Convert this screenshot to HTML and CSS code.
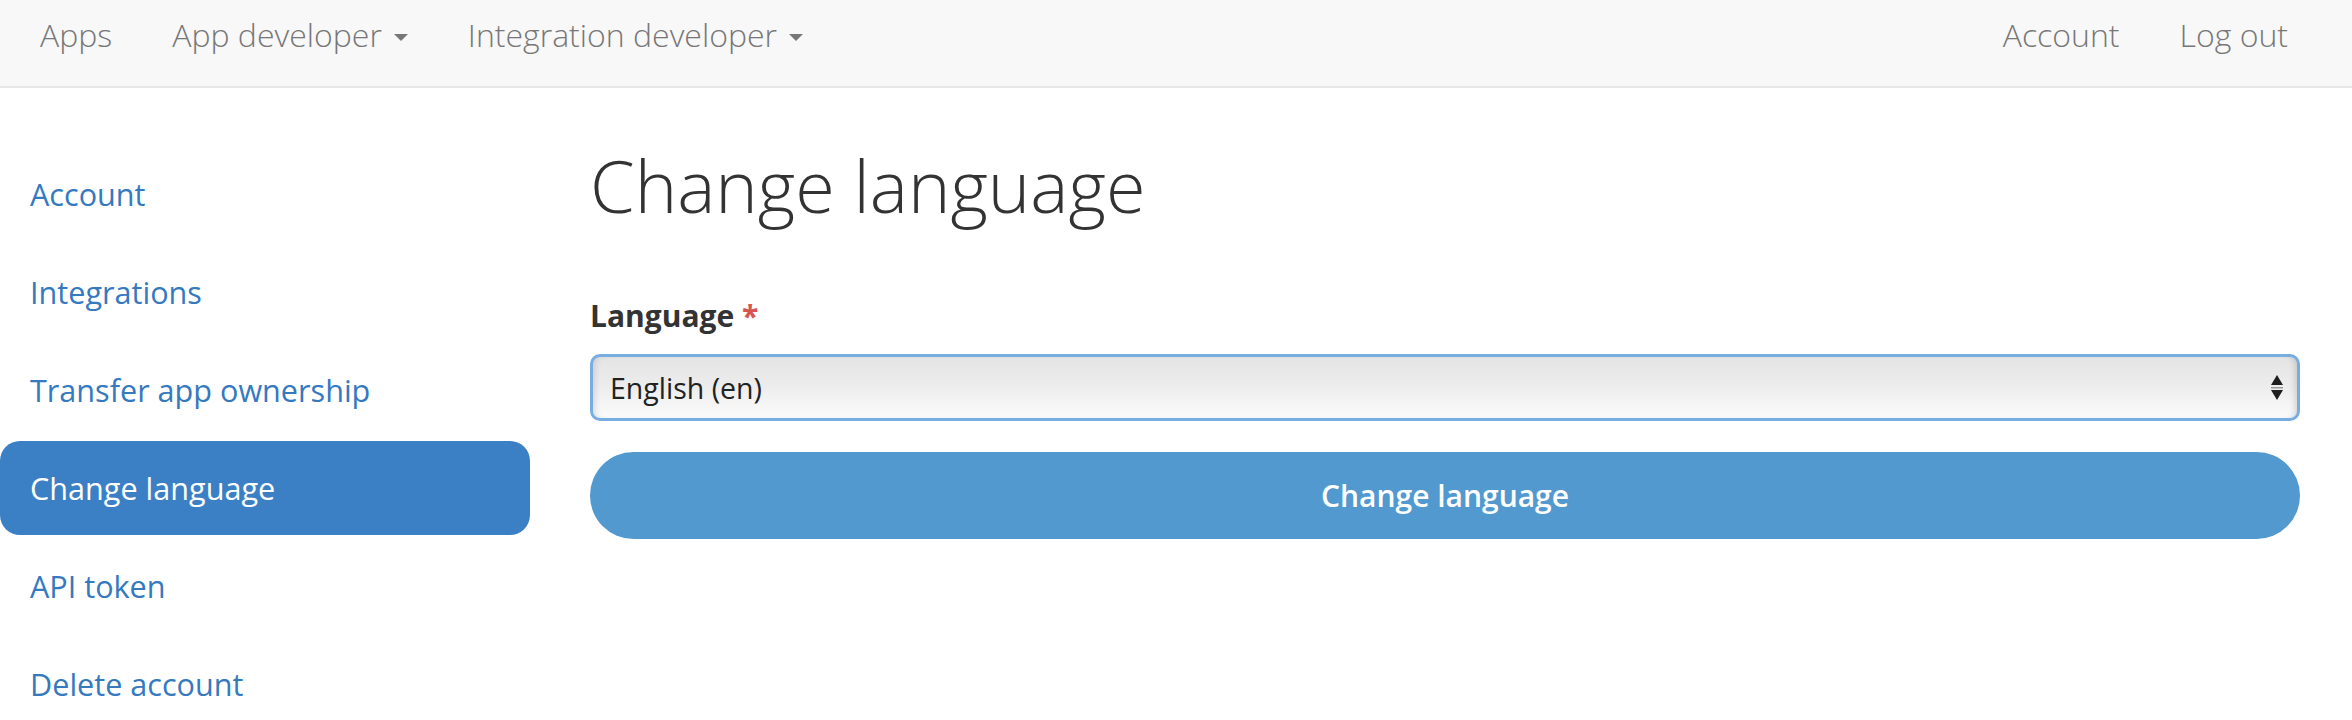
FILE: index.html
```html
<!DOCTYPE html>
<html lang="en">
<head>
<meta charset="utf-8">
<title>Change language</title>
<link rel="stylesheet" href="styles.css">
</head>
<body>
<header class="navbar">
  <nav class="nav-group">
    <a class="nav-link" href="#">Apps</a>
    <a class="nav-link" href="#">App developer <span class="caret"></span></a>
    <a class="nav-link" href="#">Integration developer <span class="caret"></span></a>
  </nav>
  <nav class="nav-group">
    <a class="nav-link" href="#">Account</a>
    <a class="nav-link" href="#">Log out</a>
  </nav>
</header>
<div class="page">
  <aside class="sidebar">
    <a class="side-link" href="#">Account</a>
    <a class="side-link" href="#">Integrations</a>
    <a class="side-link" href="#">Transfer app ownership</a>
    <a class="side-link active" href="#">Change language</a>
    <a class="side-link" href="#">API token</a>
    <a class="side-link" href="#">Delete account</a>
  </aside>
  <main class="content">
    <h1 class="title">Change language</h1>
    <form class="form">
      <label class="label" for="lang">Language <span class="req">*</span></label>
      <div class="select-wrap">
        <select id="lang" class="select">
          <option>English (en)</option>
        </select>
        <svg class="select-arrows" width="14" height="28" viewBox="0 0 14 28">
          <path d="M7 1 L13 11 L1 11 Z" fill="#1e1e1e"/>
          <rect x="1" y="13" width="12" height="1.5" fill="#9a9a9a"/>
          <path d="M1 16 L13 16 L7 26 Z" fill="#1e1e1e"/>
        </svg>
      </div>
      <button type="button" class="btn">Change language</button>
    </form>
  </main>
</div>
</body>
</html>
```
FILE: styles.css
```css
* { box-sizing: border-box; }
html, body {
  margin: 0;
  padding: 0;
  background: #fff;
  font-family: "Open Sans", "Liberation Sans", sans-serif;
  color: #333;
}
a { text-decoration: none; }

.navbar {
  height: 88px;
  background: #f8f8f8;
  border-bottom: 2px solid #e7e7e7;
  display: flex;
  justify-content: space-between;
  align-items: flex-start;
  padding: 0 34px 0 10px;
}
.nav-group {
  display: flex;
  align-items: flex-start;
}
.nav-link {
  display: flex;
  align-items: center;
  padding: 14px 30px 0;
  line-height: 42px;
  font-size: 32px;
  font-weight: 300;
  color: #777;
}
.caret {
  display: inline-block;
  width: 0;
  height: 0;
  margin-left: 12px;
  margin-top: 4px;
  border-top: 7px solid #777;
  border-left: 7px solid transparent;
  border-right: 7px solid transparent;
}

.page {
  display: flex;
  align-items: flex-start;
  padding-top: 59px;
}
.sidebar {
  width: 530px;
  flex: none;
  display: flex;
  flex-direction: column;
  gap: 4px;
}
.side-link {
  display: block;
  height: 94px;
  line-height: 94px;
  padding: 0 30px;
  font-size: 30.6px;
  font-weight: 400;
  color: #3579bf;
  border-radius: 20px;
}
.side-link.active {
  background: #3b80c4;
  color: #fff;
}

.content {
  flex: 1;
  margin: 0 52px 0 60px;
}
.title {
  margin: 0;
  font-size: 72px;
  line-height: 77px;
  font-weight: 300;
  color: #333;
}
.form {
  display: flex;
  flex-direction: column;
  margin-top: 71px;
}
.label {
  font-size: 30px;
  line-height: 42px;
  font-weight: 700;
  color: #333;
  margin-bottom: 17px;
}
.req { color: #d9534f; }

.select-wrap {
  position: relative;
}
.select {
  appearance: none;
  -webkit-appearance: none;
  width: 100%;
  height: 67px;
  border: 3px solid #78ade2;
  border-radius: 10px;
  background: linear-gradient(#e4e4e4, #ececec 45%, #fbfbfb);
  box-shadow: inset -6px 0 6px -4px rgba(0,0,0,0.15), inset 6px 0 6px -4px rgba(0,0,0,0.12);
  padding: 0 17px;
  font-family: "Open Sans", "Liberation Sans", sans-serif;
  font-size: 28.5px;
  color: #222;
  outline: none;
}
.select-arrows {
  position: absolute;
  right: 16px;
  top: 20px;
  pointer-events: none;
}

.btn {
  margin-top: 31px;
  height: 87px;
  border: none;
  border-radius: 44px;
  background: #5299cf;
  color: #fff;
  font-family: "Open Sans", "Liberation Sans", sans-serif;
  font-size: 30px;
  font-weight: 600;
  cursor: pointer;
}
```
